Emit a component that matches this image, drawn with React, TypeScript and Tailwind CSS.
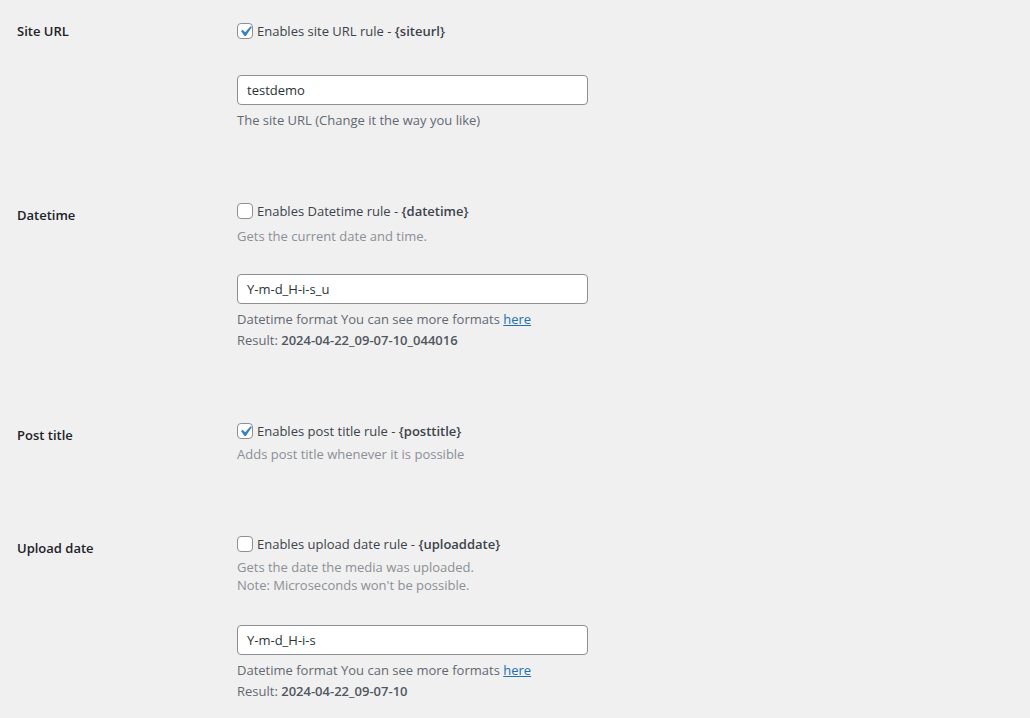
import React from 'react';

function Check({ checked }: { checked?: boolean }) {
  return (
    <span className="relative inline-flex h-4 w-4 shrink-0 items-center justify-center rounded-[4px] border border-[#8c8f94] bg-white">
      {checked && (
        <svg viewBox="0 0 20 20" className="absolute -left-[3px] -top-[3px] h-[21px] w-[21px]">
          <path d="M14.83 4.89l1.34.94-5.81 8.38H9.02L5.78 9.67l1.34-1.25 2.57 2.4z" fill="#3582c4" />
        </svg>
      )}
    </span>
  );
}

function CheckLine({ checked, text, code }: { checked?: boolean; text: string; code: string }) {
  return (
    <label className="flex h-5 items-center gap-1 text-[#3c434a]">
      <Check checked={checked} />
      <span>
        {text} - <b className="font-semibold">{code}</b>
      </span>
    </label>
  );
}

function TextInput({ value }: { value: string }) {
  return (
    <div className="flex h-[30px] w-[351px] items-center rounded-[4px] border border-[#8c8f94] bg-white px-[9px] text-[#2c3338]">
      {value}
    </div>
  );
}

function FormatNote({ result }: { result: string }) {
  return (
    <div className="mt-[5px] text-[#646970]">
      <p className="leading-5">
        Datetime format You can see more formats{' '}
        <a className="text-[#2271b1] underline">here</a>
      </p>
      <p className="mt-[1px] leading-5">
        Result: <b className="font-semibold text-[#50575e]">{result}</b>
      </p>
    </div>
  );
}

function Row({ label, labelOffset, children, top }: { label: string; labelOffset: string; children: React.ReactNode; top: string }) {
  return (
    <div className={`flex ${top}`}>
      <div className={`w-[237px] shrink-0 pl-[17px] font-semibold text-[#1d2327] leading-5 ${labelOffset}`}>{label}</div>
      <div className="flex flex-col">{children}</div>
    </div>
  );
}

export default function App() {
  return (
    <div
      className="min-h-[718px] bg-[#f0f0f1] text-[13px] leading-5"
      style={{ fontFamily: '"Open Sans", "Noto Sans", sans-serif' }}
    >
      <Row label="Site URL" labelOffset="mt-0" top="pt-[21px]">
        <CheckLine checked text="Enables site URL rule" code="{siteurl}" />
        <div className="mt-[34px]">
          <TextInput value="testdemo" />
        </div>
        <p className="mt-[5px] text-[#646970]">The site URL (Change it the way you like)</p>
      </Row>

      <Row label="Datetime" labelOffset="mt-[4px]" top="mt-[71px]">
        <CheckLine text="Enables Datetime rule" code="{datetime}" />
        <p className="mt-[5px] text-[#8c8f94]">Gets the current date and time.</p>
        <div className="mt-[28px]">
          <TextInput value="Y-m-d_H-i-s_u" />
        </div>
        <FormatNote result="2024-04-22_09-07-10_044016" />
      </Row>

      <Row label="Post title" labelOffset="mt-[4px]" top="mt-[71px]">
        <CheckLine checked text="Enables post title rule" code="{posttitle}" />
        <p className="mt-[3px] text-[#8c8f94]">Adds post title whenever it is possible</p>
      </Row>

      <Row label="Upload date" labelOffset="mt-[4px]" top="mt-[70px]">
        <CheckLine text="Enables upload date rule" code="{uploaddate}" />
        <p className="mt-[4px] leading-[18px] text-[#8c8f94]">
          Gets the date the media was uploaded.
          <br />
          Note: Microseconds won't be possible.
        </p>
        <div className="mt-[31px]">
          <TextInput value="Y-m-d_H-i-s" />
        </div>
        <FormatNote result="2024-04-22_09-07-10" />
      </Row>
    </div>
  );
}
